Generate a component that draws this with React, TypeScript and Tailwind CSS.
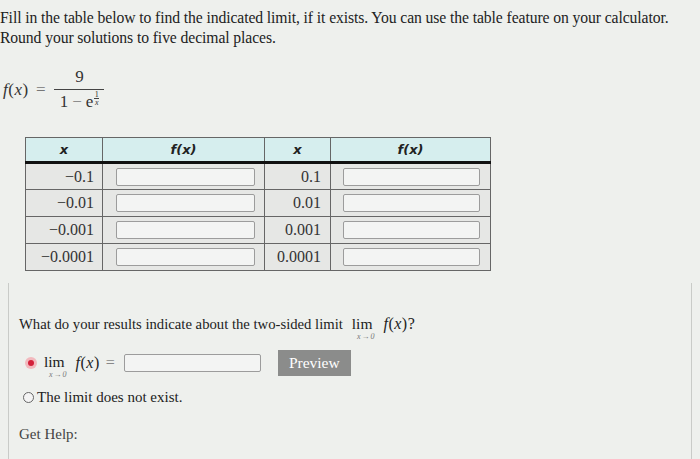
import React from 'react';

const Lim: React.FC = () => (
  <span className="inline-flex flex-col items-center align-top leading-none">
    <span className="text-[15.5px] leading-[16px]">lim</span>
    <span className="text-[8px] leading-[10px] italic text-[#777] ml-[8px] tracking-[1px]">x→0</span>
  </span>
);

const Fx: React.FC = () => (
  <span className="tracking-[0.5px]">
    <span className="italic">f</span>(<span className="italic">x</span>)
  </span>
);

const Box: React.FC<{ w: string }> = ({ w }) => (
  <div className={`h-[18px] ${w} bg-[#f3f4f3] border border-[#9c9c9c] rounded-[2px]`} />
);

const rowsLeft = ['−0.1', '−0.01', '−0.001', '−0.0001'];
const rowsRight = ['0.1', '0.01', '0.001', '0.0001'];

export default function App() {
  return (
    <div className="w-[700px] h-[459px] overflow-hidden bg-[#eef0ed] text-[#222] font-['Liberation_Serif',serif]">
      {/* prompt */}
      <div className="pt-[8px] text-[15.7px] leading-[20px] tracking-[-0.1px]">
        <p>Fill in the table below to find the indicated limit, if it exists. You can use the table feature on your calculator.</p>
        <p>Round your solutions to five decimal places.</p>
      </div>

      {/* formula */}
      <div className="mt-[17px] ml-[3px] flex items-center gap-[8px] text-[17px] text-[#333]">
        <span className="tracking-[1px]"><Fx /> <span className="text-[#777] ml-[2px]">=</span></span>
        <div className="flex flex-col items-center">
          <span className="leading-[24px]">9</span>
          <span className="w-[50px] border-t border-[#444]" />
          <span className="leading-[24px] flex items-start">
            1 <span className="text-[#777] mx-[4px]">−</span> e
            <span className="flex flex-col items-center text-[8px] leading-[7px] italic ml-[1px] mt-[1px]">
              <span className="not-italic">1</span>
              <span className="w-[5px] border-t border-[#444]" />
              <span>x</span>
            </span>
          </span>
        </div>
      </div>

      {/* table */}
      <div className="mt-[23px] ml-[25px]">
        <table className="border-collapse text-[16px] text-[#333]">
          <thead>
            <tr className="h-[25px] bg-[#d6eeee] font-['DejaVu_Sans',sans-serif] text-[13px] font-bold italic text-[#222]">
              <th className="w-[77px] border border-[#666] border-b-[3px] border-b-[#111]">x</th>
              <th className="w-[162px] border border-[#666] border-b-[3px] border-b-[#111]">f(x)</th>
              <th className="w-[66px] border border-[#666] border-b-[3px] border-b-[#111]">x</th>
              <th className="w-[160px] border border-[#666] border-b-[3px] border-b-[#111]">f(x)</th>
            </tr>
          </thead>
          <tbody>
            {rowsLeft.map((v, i) => (
              <tr key={v} className="h-[27px] bg-[#e6e7e5]">
                <td className="border border-[#666] text-right pr-[8px]">{v}</td>
                <td className="border border-[#666] pl-[13px]"><Box w="w-[139px]" /></td>
                <td className="border border-[#666] text-right pr-[9px]">{rowsRight[i]}</td>
                <td className="border border-[#666] pl-[12px]"><Box w="w-[137px]" /></td>
              </tr>
            ))}
          </tbody>
        </table>
      </div>

      {/* question panel */}
      <div className="mt-[12px] mx-[8px] h-[200px] border-l border-r border-[#c9cbc8] pl-[10px] text-[15px]">
        <div className="pt-[31px] flex items-start gap-[6px]">
          <span className="leading-[20px] text-[14.7px]">What do your results indicate about the two-sided limit</span>
          <span className="flex items-start gap-[8px] mt-[2px]">
            <Lim />
            <span className="leading-[20px] -mt-[2px] text-[16px]"><Fx />?</span>
          </span>
        </div>

        <div className="mt-[4px] ml-[6px] flex items-center">
          <span className="w-[12px] h-[12px] rounded-full bg-[#f2b9be] flex items-center justify-center">
            <span className="w-[6px] h-[6px] rounded-full bg-[#d3203a]" />
          </span>
          <span className="ml-[4px] mt-[8px]"><Lim /></span>
          <span className="ml-[8px] text-[16px]"><Fx /> <span className="text-[#888] ml-[2px]">=</span></span>
          <span className="ml-[9px]"><Box w="w-[137px]" /></span>
          <button className="ml-[17px] w-[73px] h-[26px] bg-[#8b8c8b] text-white text-[15.5px] font-['Liberation_Serif',serif]">Preview</button>
        </div>

        <div className="mt-[7px] ml-[4px] flex items-center">
          <span className="w-[11px] h-[11px] rounded-full border border-[#666] bg-[#f4f4f4]" />
          <span className="ml-[3px] leading-[20px] text-[15px]">The limit does not exist.</span>
        </div>

        <div className="mt-[17px] text-[#444] leading-[20px] text-[15px]">Get Help:</div>
      </div>
    </div>
  );
}
